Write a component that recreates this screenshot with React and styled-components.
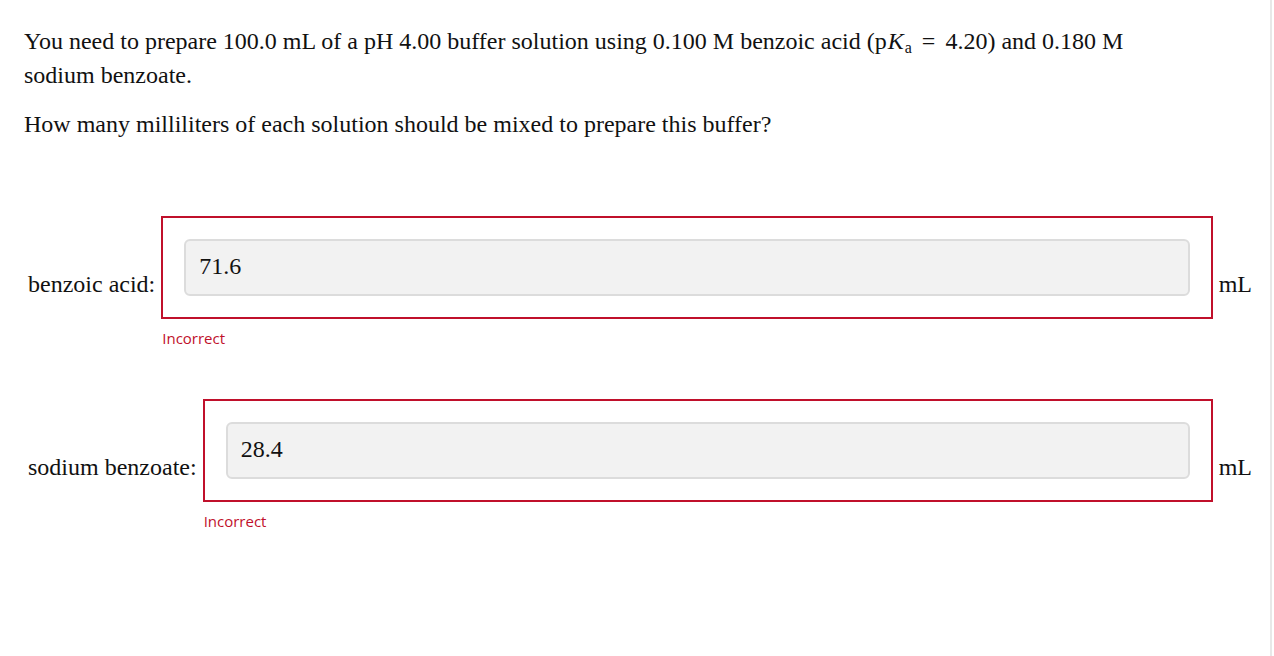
import React from "react";
import styled, { createGlobalStyle } from "styled-components";

const GlobalStyle = createGlobalStyle`
  html, body {
    margin: 0;
    padding: 0;
    background: #fff;
  }
  body {
    font-family: "Liberation Serif", "Times New Roman", serif;
    color: #111;
  }
`;

const questions = [
  { id: "acid", label: "benzoic acid:", value: "71.6" },
  { id: "base", label: "sodium benzoate:", value: "28.4" },
];

const App = () => {
  return (
    <SPage>
      <GlobalStyle />
      <SText>
        {"You need to prepare 100.0 mL of a pH 4.00 buffer solution using 0.100 M benzoic acid (p"}
        <SVar>K</SVar>
        <SSub>a</SSub>
        <SEq>=</SEq>
        {"4.20) and 0.180 M "}
        {"sodium benzoate."}
      </SText>
      <SText>How many milliliters of each solution should be mixed to prepare this buffer?</SText>
      <SAnswers>
        {questions.map((q) => (
          <SAnswer key={q.id}>
            <SLabel>{q.label}</SLabel>
            <SField>
              <SInput defaultValue={q.value} />
            </SField>
            <SUnit>mL</SUnit>
            <SFeedback>Incorrect</SFeedback>
          </SAnswer>
        ))}
      </SAnswers>
    </SPage>
  );
};

export default App;

const SPage = styled.div`
  box-sizing: border-box;
  width: 1272px;
  min-height: 656px;
  padding: 24px 18px 0 24px;
  border-right: 2px solid #e8e8e8;
`;

const SText = styled.p`
  margin: 0 0 15px;
  font-size: 24px;
  line-height: 34px;
  max-width: 1150px;
`;

const SVar = styled.i`
  margin-left: 1px;
`;

const SSub = styled.sub`
  font-size: 16px;
  vertical-align: -4px;
  line-height: 0;
  margin-left: 1px;
`;

const SEq = styled.span`
  margin: 0 10px 0 10px;
`;

const SAnswers = styled.div`
  display: flex;
  flex-direction: column;
  gap: 51px;
  margin-top: 75px;
`;

const SAnswer = styled.div`
  display: grid;
  grid-template-columns: auto 1fr auto;
  align-items: start;
`;

const SLabel = styled.span`
  margin: 55px 6px 0 4px;
  font-size: 24px;
  line-height: 26px;
  white-space: nowrap;
`;

const SField = styled.div`
  border: 2px solid #c0102b;
  padding: 21px;
`;

const SInput = styled.input`
  display: block;
  box-sizing: border-box;
  width: 100%;
  height: 57px;
  padding: 0 13px 3px;
  border: 2px solid #dcdcdc;
  border-radius: 6px;
  background: #f2f2f2;
  font-family: "Liberation Serif", "Times New Roman", serif;
  font-size: 24px;
  color: #111;
  outline: none;
`;

const SUnit = styled.span`
  margin: 55px 0 0 6px;
  font-size: 24px;
  line-height: 26px;
`;

const SFeedback = styled.div`
  grid-column: 2;
  margin: 9px 0 0 1px;
  font-family: "Open Sans", "Noto Sans", sans-serif;
  font-size: 15px;
  line-height: 20px;
  color: #c0102b;
`;
